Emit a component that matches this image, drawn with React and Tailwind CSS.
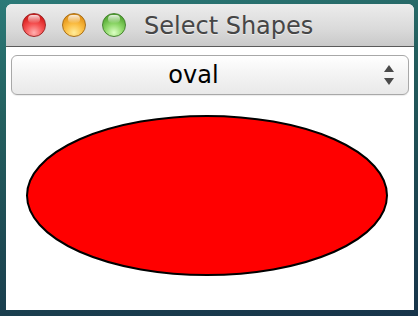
function Light({ ring, grad }) {
  return (
    <span className={`relative block w-[24px] h-[24px] rounded-full border ${ring} ${grad}`}>
      <span className="absolute left-[5px] top-[1px] w-[12px] h-[8px] rounded-full bg-[linear-gradient(to_bottom,rgba(255,255,255,0.85),rgba(255,255,255,0.05))]" />
    </span>
  );
}

export default function App() {
  const font = { fontFamily: '"DejaVu Sans", "Liberation Sans", sans-serif' };
  return (
    <div
      className="w-[418px] h-[316px] overflow-hidden pt-[4px] pl-[6px] bg-[linear-gradient(170deg,#2b7a78_0%,#24605f_30%,#1d4852_65%,#17344a_100%)]"
      style={font}
    >
      <div className="w-[408px] h-[306px] rounded-t-[6px] overflow-hidden bg-white flex flex-col">
        <div className="h-[42px] flex items-center bg-[linear-gradient(to_bottom,#ececec,#dadada_60%,#c9c9c9)] border-b border-[#5a5a5a] box-content">
          <div className="flex items-center gap-[16px] pl-[16px]">
            <Light ring="border-[#9e2a2a]" grad="bg-[radial-gradient(circle_at_50%_85%,#ffb0b0_0%,#f65454_40%,#d9201f_75%,#b01515_100%)]" />
            <Light ring="border-[#a8701a]" grad="bg-[radial-gradient(circle_at_50%_85%,#ffec9a_0%,#fbbf45_40%,#e5961c_75%,#c07710_100%)]" />
            <Light ring="border-[#478431]" grad="bg-[radial-gradient(circle_at_50%_85%,#dcffc4_0%,#8fd86a_40%,#58ab36_75%,#3c8626_100%)]" />
          </div>
          <span className="ml-[18px] text-[24px] leading-none text-[#464646] mt-[2px] [text-shadow:0_1px_0_rgba(255,255,255,0.6)]">Select Shapes</span>
        </div>
        <div className="pt-[8px] px-[5px]">
          <div className="h-[40px] rounded-[6px] border border-[#a8a8a8] bg-[linear-gradient(to_bottom,#ffffff,#f3f3f3_50%,#e9e9e9)] flex items-center shadow-[0_1px_1px_rgba(0,0,0,0.08)]">
            <span className="flex-1 text-center text-[24px] leading-none text-black pl-[2px]">oval</span>
            <div className="w-[35px] flex flex-col items-center gap-[6px] pr-[3px]">
              <svg width="10" height="7" viewBox="0 0 10 7"><polygon points="5,0 10,7 0,7" fill="#4a4a4a" /></svg>
              <svg width="10" height="7" viewBox="0 0 10 7"><polygon points="0,0 10,0 5,7" fill="#4a4a4a" /></svg>
            </div>
          </div>
        </div>
        <svg width="408" height="215" className="block">
          <ellipse cx="201" cy="100.5" rx="180" ry="79.5" fill="#ff0000" stroke="#000" strokeWidth="2" />
        </svg>
      </div>
    </div>
  );
}
